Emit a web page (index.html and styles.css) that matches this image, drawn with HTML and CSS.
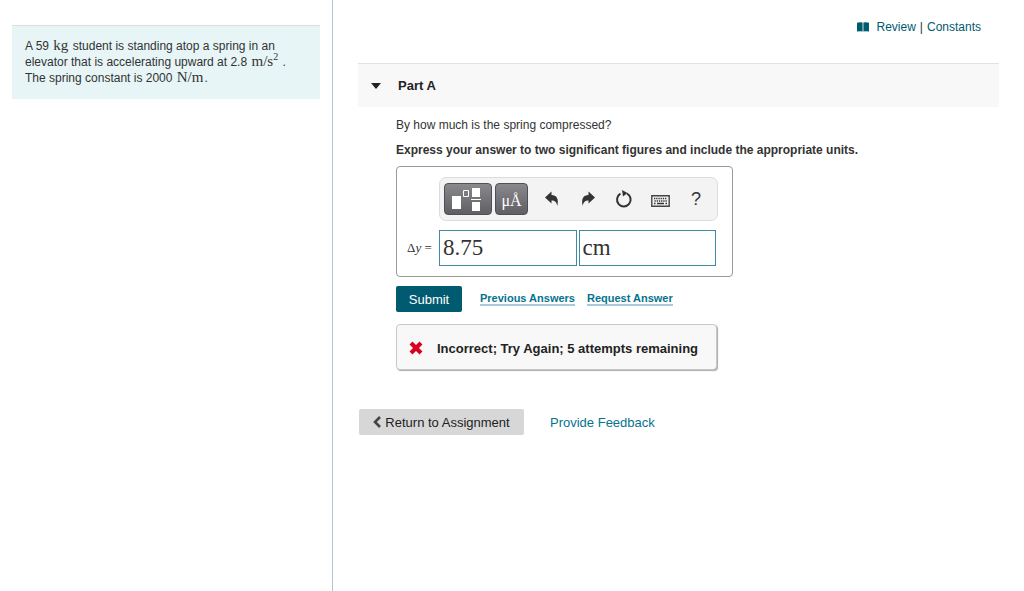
FILE: index.html
```html
<!DOCTYPE html>
<html lang="en">
<head>
<meta charset="utf-8">
<title>Part A - Spring Compression</title>
<link rel="stylesheet" href="styles.css">
</head>
<body>
<div class="page">
  <aside class="sidebar">
    <p class="problem">A 59 <span class="math">kg</span> student is standing atop a spring in an elevator that is accelerating upward at 2.8 <span class="math">m/s<sup>2</sup></span> . The spring constant is 2000 <span class="math">N/m</span>.</p>
  </aside>
  <main class="main">
    <nav class="resources">
      <svg class="book" viewBox="0 0 12 10" aria-hidden="true"><path d="M0 .8Q3 0 5.600 .6V9.400Q3 8.800 0 9.600ZM6.400 .6Q9 0 12 .8V9.600Q9 8.800 6.400 9.400Z" fill="#005a70"/></svg>
      <a href="#review">Review</a><span class="bar">|</span><a href="#constants">Constants</a>
    </nav>
    <header class="part">
      <svg class="caret" viewBox="0 0 10 6" aria-hidden="true"><path d="M0 0H10L5 6Z" fill="#222"/></svg>
      <h1>Part A</h1>
    </header>
    <section class="body">
      <p class="question">By how much is the spring compressed?</p>
      <p class="instructions">Express your answer to two significant figures and include the appropriate units.</p>
      <form class="answer">
        <div class="toolbar">
          <button type="button" class="tool dark templates" aria-label="Templates">
            <svg width="32" height="26" viewBox="0 0 32 26"><path d="M0 10H9V23H0ZM20 2H28V11H20ZM20 16H28V25H20ZM19 13H29V14H19Z" fill="#fff"/><path d="M11.500 4.500H16.500V10.500H11.500Z" fill="none" stroke="#fff"/></svg>
          </button>
          <button type="button" class="tool dark symbols" aria-label="Symbols">μÅ</button>
          <button type="button" class="tool" aria-label="Undo">
            <svg width="16" height="16" viewBox="0 0 16 16"><path d="M1 6.500L7.500 .5V4C12.500 4 15 7.500 13.300 15C12.500 11 11 9.500 7.500 9.500V12.500Z" fill="#333"/></svg>
          </button>
          <button type="button" class="tool" aria-label="Redo">
            <svg width="16" height="16" viewBox="0 0 16 16"><path d="M15 6.500L8.500 .5V4C3.500 4 1 7.500 2.700 15C3.500 11 5 9.500 8.500 9.500V12.500Z" fill="#333"/></svg>
          </button>
          <button type="button" class="tool" aria-label="Reset">
            <svg width="18" height="18" viewBox="0 0 18 18"><path d="M12 3.600A6.800 6.800 0 1 1 5.500 3.700" fill="none" stroke="#333" stroke-width="2"/><path d="M7 0L12.500 3L8 6.500Z" fill="#333"/></svg>
          </button>
          <button type="button" class="tool keyboard" aria-label="Keyboard shortcuts">
            <svg width="19" height="12" viewBox="0 0 19 12"><path d="M.8 .8H18.200V11.200H.8Z" fill="none" stroke="#444" stroke-width="1.400"/><path d="M3 3.500H16M3.500 6H16" stroke="#333" stroke-width="1.500" stroke-dasharray="1.300 .9"/><path d="M3 8.500H4.500M6 8.500H13M14.500 8.500H16" stroke="#333" stroke-width="1.300"/></svg>
          </button>
          <button type="button" class="tool help" aria-label="Help">?</button>
        </div>
        <label class="lhs" for="value">Δ<i>y</i> =</label>
        <div class="fields">
          <input id="value" class="field" type="text" value="8.75">
          <input class="field" type="text" value="cm" aria-label="Units">
        </div>
      </form>
      <div class="actions">
        <button type="button" class="submit">Submit</button>
        <a href="#previous">Previous Answers</a>
        <a href="#request">Request Answer</a>
      </div>
      <div class="feedback" role="status">
        <svg width="14" height="14" viewBox="0 0 14 14" aria-hidden="true"><path d="M2 2L12 12M12 2L2 12" stroke="#db0020" stroke-width="4.200"/></svg>
        <span>Incorrect; Try Again; 5 attempts remaining</span>
      </div>
    </section>
    <footer class="footer">
      <button type="button" class="return">
        <svg width="8" height="12" viewBox="0 0 8 12" aria-hidden="true"><path d="M7 1L2 6L7 11" fill="none" stroke="#444" stroke-width="2.600"/></svg>
        <span>Return to Assignment</span>
      </button>
      <a href="#feedback">Provide Feedback</a>
    </footer>
  </main>
</div>
</body>
</html>
```
FILE: styles.css
```css
* { box-sizing: border-box; }
body {
  margin: 0;
  background: #fff;
  color: #333;
  font-family: "Liberation Sans", Arial, sans-serif;
  font-size: 12px;
}
p, h1 { margin: 0; }
button { font-family: inherit; cursor: pointer; }
svg { display: block; flex: none; }
a { color: #05738f; text-decoration: none; }

.page {
  display: grid;
  grid-template-columns: 333fr 691fr;
  min-height: 100vh;
}
.sidebar {
  padding: 25px 12px 0;
  border-right: 1px solid #b3c4d6;
}
.problem {
  padding: 12px 24px 13px 13px;
  background: #e7f5f7;
  border-top: 1px solid #dcdfe2;
  line-height: 16px;
}
.math {
  margin: 0 1px;
  font-family: "Liberation Serif", "Times New Roman", serif;
  font-size: 15px;
  line-height: 12px;
}
.math sup { font-size: 10px; line-height: 0; }

.main { padding: 18px 25px 24px; }
.resources {
  display: flex;
  align-items: center;
  justify-content: flex-end;
  padding-right: 18px;
  font-size: 12px;
  line-height: 18px;
}
.resources a { color: #005a70; }
.book { width: 12px; height: 10px; margin-right: 7px; }
.bar { margin: 0 4px; }

.part {
  display: flex;
  align-items: center;
  gap: 17px;
  height: 44px;
  margin-top: 27px;
  padding-left: 13px;
  background: #f8f8f8;
  border-top: 1px solid #e2e2e2;
}
.part h1 { color: #222; font-size: 13px; }
.caret { width: 10px; height: 6px; }

.body { padding: 10px 0 0 38px; }
.question { line-height: 16px; }
.instructions {
  margin-top: 9px;
  font-weight: bold;
  line-height: 16px;
}
.answer {
  display: grid;
  grid-template-columns: 32px minmax(0, 1fr);
  gap: 9px 0;
  align-items: center;
  max-width: 337px;
  margin-top: 8px;
  padding: 10px 14px 10px 10px;
  border: 1px solid #999;
  border-radius: 4px;
}
.toolbar {
  grid-column: 2;
  display: flex;
  align-items: center;
  height: 44px;
  padding-left: 4px;
  background: #f3f3f3;
  border: 1px solid #dcdcdc;
  border-radius: 7px;
}
.tool {
  display: flex;
  align-items: center;
  justify-content: center;
  width: 36px;
  height: 32px;
  padding: 0;
  background: none;
  border: 0;
  color: #333;
}
.dark {
  background: linear-gradient(#88888d, #606064);
  border: 1px solid #505054;
  border-radius: 4px;
  color: #fff;
}
.templates { width: 48px; margin-right: 3px; }
.symbols {
  width: 33px;
  margin-right: 6px;
  padding-top: 4px;
  font-family: "Liberation Serif", "Times New Roman", serif;
  font-size: 16px;
}
.keyboard { padding-top: 4px; }
.help { font-size: 18px; }
.lhs {
  font-family: "Liberation Serif", "Times New Roman", serif;
  font-size: 13px;
}
.fields { display: flex; gap: 2px; padding-right: 2px; }
.field {
  flex: 1;
  min-width: 0;
  height: 36px;
  padding: 0 3px;
  background: #fff;
  border: 1px solid #3f8aa3;
  color: #333;
  font-family: "Liberation Serif", "Times New Roman", serif;
  font-size: 23px;
}
.actions {
  display: flex;
  align-items: center;
  gap: 12px;
  margin-top: 9px;
}
.submit {
  width: 66px;
  height: 26px;
  margin-right: 6px;
  padding: 0;
  background: #005a70;
  border: 0;
  border-radius: 2px;
  color: #fff;
  font-size: 13px;
}
.actions a {
  border-bottom: 2px solid #a5ccd8;
  font-size: 11px;
  font-weight: bold;
  line-height: 12px;
}
.feedback {
  display: flex;
  align-items: center;
  gap: 14px;
  max-width: 321px;
  height: 46px;
  margin-top: 12px;
  padding: 2px 0 0 12px;
  background: #f8f8f8;
  border: 1px solid #c8c8c8;
  border-radius: 4px;
  box-shadow: 1px 1px 1px #aaa;
  color: #222;
  font-size: 13px;
  font-weight: bold;
}
.footer {
  display: flex;
  align-items: center;
  gap: 26px;
  margin-top: 39px;
  padding-left: 1px;
  font-size: 13px;
}
.return {
  display: flex;
  align-items: center;
  justify-content: center;
  gap: 4px;
  width: 165px;
  height: 26px;
  padding: 0;
  background: #d7d7d7;
  border: 0;
  border-radius: 2px;
  color: #222;
  font-size: 13px;
}
```
